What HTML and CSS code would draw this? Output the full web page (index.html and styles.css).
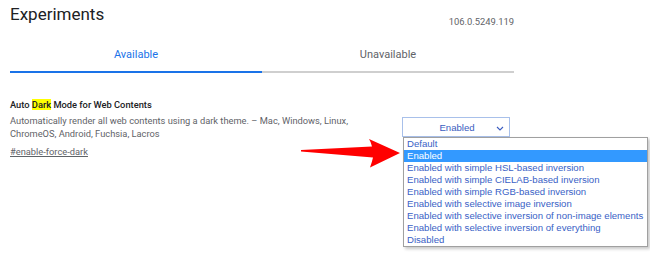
FILE: index.html
```html
<!DOCTYPE html>
<html>
<head>
<meta charset="utf-8">
<link rel="stylesheet" href="styles.css">
</head>
<body>
<div class="page">
  <header class="header">
    <h1 class="title">Experiments</h1>
    <span class="version">106.0.5249.119</span>
  </header>
  <nav class="tabs">
    <div class="tab active">Available</div>
    <div class="tab">Unavailable</div>
  </nav>
  <section class="experiment">
    <div class="exp-info">
      <h2 class="exp-name">Auto <mark class="hl">Dark</mark> Mode for Web Contents</h2>
      <p class="exp-desc">Automatically render all web contents using a dark theme. – Mac, Windows, Linux, ChromeOS, Android, Fuchsia, Lacros</p>
      <a class="exp-link">#enable-force-dark</a>
    </div>
    <div class="exp-action">
      <div class="select">
        <span class="select-value">Enabled</span>
        <svg class="chevron" width="8" height="5" viewBox="0 0 8 5"><path d="M1 1 L4 4 L7 1" fill="none" stroke="#3b5cc0" stroke-width="1.1"/></svg>
        <ul class="listbox">
          <li class="option">Default</li>
          <li class="option selected">Enabled</li>
          <li class="option">Enabled with simple HSL-based inversion</li>
          <li class="option">Enabled with simple CIELAB-based inversion</li>
          <li class="option">Enabled with simple RGB-based inversion</li>
          <li class="option">Enabled with selective image inversion</li>
          <li class="option">Enabled with selective inversion of non-image elements</li>
          <li class="option">Enabled with selective inversion of everything</li>
          <li class="option">Disabled</li>
        </ul>
      </div>
    </div>
  </section>
  <svg class="arrow" width="106" height="34" viewBox="0 0 106 34">
    <path d="M3 14 L74 10.5 Q73 6 71 3 L102 17 L72 31.5 Q74 26 75 21.5 L3 15.6 Z" fill="#ff0000"/>
  </svg>
</div>
</body>
</html>
```

FILE: styles.css
```css
* { box-sizing: border-box; }
html, body { margin: 0; padding: 0; background: #fff; }
body { font-family: Roboto, "Noto Sans", sans-serif; color: #202124; }
.page { position: relative; width: 650px; height: 258px; padding: 0 10px; overflow: hidden; }

.header { display: flex; justify-content: space-between; align-items: flex-start; width: 504px; padding-top: 4px; }
.title { margin: 0; font-size: 17px; font-weight: 400; line-height: 20px; color: #202124; }
.version { font-size: 9.4px; line-height: 12px; color: #5f6368; margin-top: 12px; }

.tabs { display: flex; width: 504px; margin-top: 20px; }
.tab { flex: 1; text-align: center; font-size: 11px; line-height: 13px; color: #5f6368; padding-bottom: 10px; border-bottom: 2px solid #cfcfcf; }
.tab.active { color: #1a73e8; border-bottom-color: #1a73e8; }

.experiment { display: flex; justify-content: space-between; width: 504px; margin-top: 25px; }
.exp-info { width: 372px; }
.exp-name { margin: 0; font-size: 9.3px; font-weight: 500; line-height: 13px; color: #202124; }
.hl { background: #ffff00; color: #202124; padding: 0; }
.exp-desc { margin: 3px 0 0; font-size: 9.3px; line-height: 13px; color: #5f6368; }
.exp-link { display: inline-block; margin-top: 3px; font-size: 9.3px; line-height: 13px; color: #5f6368; text-decoration: underline; }

.exp-action { padding-top: 19px; padding-right: 4px; }
.select { position: relative; width: 108px; height: 20px; border: 1px solid #a8c0ea; display: flex; align-items: center; justify-content: center; font-family: "Liberation Sans", Arial, sans-serif; font-size: 9.6px; color: #3b5cc0; }
.select-value { margin-left: 2px; }
.chevron { position: absolute; right: 5px; top: 8px; }

.listbox { position: absolute; left: 0; top: 19px; width: 245px; margin: 0; padding: 0; list-style: none; border: 1px solid #a0a0a0; background: #fff; box-shadow: 2px 2px 3px rgba(0,0,0,0.22); font-family: "Liberation Sans", Arial, sans-serif; font-size: 9.6px; z-index: 2; }
.option { height: 12px; line-height: 12px; padding-left: 3px; color: #3a5fc6; white-space: nowrap; }
.option.selected { background: #3399ff; color: #fff; }

.arrow { position: absolute; left: 298px; top: 136px; z-index: 3; }
```
